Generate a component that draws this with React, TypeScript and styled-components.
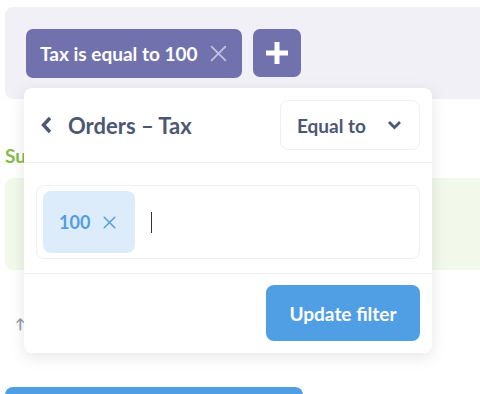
import styled, { createGlobalStyle } from "styled-components";

const GlobalStyle = createGlobalStyle`
  html, body {
    margin: 0;
    padding: 0;
    background: #ffffff;
    font-family: Lato, "Noto Sans", sans-serif;
    overflow: hidden;
  }
`;

const CloseIcon = ({ size, color, weight }: { size: number; color: string; weight: number }) => (
  <svg width={size} height={size} viewBox="0 0 16 16" fill="none">
    <path d="M1.5 1.5 L14.5 14.5 M14.5 1.5 L1.5 14.5" stroke={color} strokeWidth={weight} strokeLinecap="round" />
  </svg>
);

const App = () => {
  return (
    <Page>
      <GlobalStyle />
      <FilterBar>
        <FilterPill>
          <PillText>Tax is equal to 100</PillText>
          <CloseIcon size={17} color="#c3c4df" weight={1.6} />
        </FilterPill>
        <AddButton>
          <svg width="22" height="22" viewBox="0 0 22 22">
            <path d="M11 0 V22 M0 11 H22" stroke="#ffffff" strokeWidth="5" />
          </svg>
        </AddButton>
      </FilterBar>
      <SummaryLabel>Summarized by</SummaryLabel>
      <SummaryPanel />
      <SortArrow>↑</SortArrow>
      <BlueBar />

      <Popover>
        <Header>
          <BackLink>
            <svg width="13" height="18" viewBox="0 0 13 18">
              <path d="M10 2 L3.5 9 L10 16" stroke="#4c5773" strokeWidth="3.4" fill="none" />
            </svg>
            <HeaderTitle>Orders – Tax</HeaderTitle>
          </BackLink>
          <OperatorSelect>
            <span>Equal to</span>
            <svg width="15" height="10" viewBox="0 0 15 10">
              <path d="M2 2 L7.5 7.5 L13 2" stroke="#4c5773" strokeWidth="2.8" fill="none" />
            </svg>
          </OperatorSelect>
        </Header>
        <Body>
          <TokenField>
            <Token>
              <span>100</span>
              <CloseIcon size={13} color="#509ee3" weight={1.8} />
            </Token>
            <Caret />
          </TokenField>
        </Body>
        <Footer>
          <UpdateButton>Update filter</UpdateButton>
        </Footer>
      </Popover>
    </Page>
  );
};

export default App;

const Page = styled.div`
  position: relative;
  width: 480px;
  height: 394px;
  padding: 7px 0 0 5px;
  box-sizing: border-box;
  overflow: hidden;
`;

const FilterBar = styled.div`
  display: flex;
  align-items: flex-start;
  gap: 11px;
  height: 92px;
  width: 500px;
  box-sizing: border-box;
  padding: 22px 0 0 21px;
  background: #f1f0f7;
  border-radius: 8px;
`;

const FilterPill = styled.div`
  display: flex;
  align-items: center;
  gap: 13px;
  height: 49px;
  padding: 0 15px 0 14px;
  box-sizing: border-box;
  background: #7172ad;
  border-radius: 7px;
`;

const PillText = styled.span`
  color: #ffffff;
  font-size: 19px;
  font-weight: 700;
`;

const AddButton = styled.div`
  display: flex;
  align-items: center;
  justify-content: center;
  width: 48px;
  height: 48px;
  background: #7172ad;
  border-radius: 7px;
`;

const SummaryLabel = styled.div`
  margin-top: 45px;
  height: 24px;
  color: #84bb4c;
  font-size: 19px;
  font-weight: 700;
  line-height: 24px;
  white-space: nowrap;
`;

const SummaryPanel = styled.div`
  margin-top: 10px;
  width: 500px;
  height: 92px;
  background: #f2f8ea;
  border-radius: 8px;
`;

const SortArrow = styled.div`
  margin: 42px 0 0 10px;
  height: 24px;
  color: #949aab;
  font-size: 14px;
  font-weight: 700;
  line-height: 24px;
`;

const BlueBar = styled.div`
  margin-top: 51px;
  width: 298px;
  height: 30px;
  background: #509ee3;
  border-radius: 8px;
`;

const Popover = styled.div`
  position: absolute;
  left: 24px;
  top: 88px;
  width: 408px;
  height: 265px;
  display: flex;
  flex-direction: column;
  background: #ffffff;
  border-radius: 8px;
  box-shadow: 0 4px 16px rgba(0, 0, 0, 0.1);
`;

const Header = styled.div`
  display: flex;
  align-items: center;
  justify-content: space-between;
  height: 74px;
  padding: 0 12px 0 16px;
  border-bottom: 1px solid #eeeff2;
`;

const BackLink = styled.div`
  display: flex;
  align-items: center;
  gap: 15px;
`;

const HeaderTitle = styled.span`
  color: #4c5773;
  font-size: 22px;
  font-weight: 700;
`;

const OperatorSelect = styled.div`
  display: flex;
  align-items: center;
  justify-content: space-between;
  width: 140px;
  height: 50px;
  padding: 0 17px 0 16px;
  box-sizing: border-box;
  border: 1px solid #eeeff2;
  border-radius: 8px;
  color: #4c5773;
  font-size: 19px;
  font-weight: 700;
`;

const Body = styled.div`
  padding: 22px 12px 14px;
  border-bottom: 1px solid #eeeff2;
`;

const TokenField = styled.div`
  display: flex;
  align-items: center;
  gap: 16px;
  height: 74px;
  padding: 0 6px;
  box-sizing: border-box;
  border: 1px solid #eeeff2;
  border-radius: 8px;
`;

const Token = styled.div`
  display: flex;
  align-items: center;
  gap: 13px;
  width: 92px;
  height: 62px;
  padding-left: 16px;
  box-sizing: border-box;
  background: #ddecfa;
  border-radius: 8px;
  color: #509ee3;
  font-size: 18px;
  font-weight: 700;
`;

const Caret = styled.div`
  width: 1px;
  height: 21px;
  background: #2e353b;
`;

const Footer = styled.div`
  display: flex;
  justify-content: flex-end;
  padding: 11px 12px 0;
`;

const UpdateButton = styled.button`
  width: 154px;
  height: 56px;
  border: none;
  border-radius: 8px;
  background: #509ee3;
  color: #ffffff;
  font-family: Lato, "Noto Sans", sans-serif;
  font-size: 19px;
  font-weight: 700;
`;
